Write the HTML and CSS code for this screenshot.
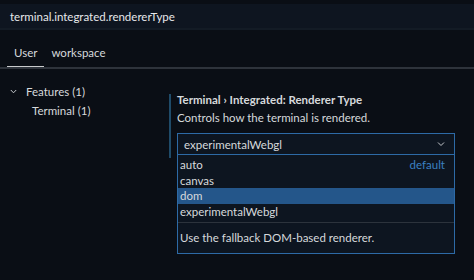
FILE: index.html
```html
<!DOCTYPE html>
<html>
<head>
<meta charset="utf-8">
<link rel="stylesheet" href="styles.css">
</head>
<body>
<div class="search">terminal.integrated.rendererType</div>
<div class="tabs">
  <div class="tab active">User</div>
  <div class="tab">workspace</div>
</div>
<div class="main">
  <div class="toc">
    <div class="toc-row"><svg class="chev" width="7" height="5" viewBox="0 0 7 5"><path d="M0.8 1 L3.5 3.8 L6.2 1" fill="none" stroke="#c5c8cc" stroke-width="1"/></svg>Features (1)</div>
    <div class="toc-row sub">Terminal (1)</div>
  </div>
  <div class="setting">
    <div class="head">
      <div class="title">Terminal › Integrated: Renderer Type</div>
      <div class="desc">Controls how the terminal is rendered.</div>
      <div class="select">
        <span>experimentalWebgl</span>
        <svg width="8" height="6" viewBox="0 0 8 6"><path d="M1 1.5 L4 4.5 L7 1.5" fill="none" stroke="#c5c8cc" stroke-width="1"/></svg>
      </div>
    </div>
    <div class="list">
      <div class="opt"><span>auto</span><span class="def">default</span></div>
      <div class="opt">canvas</div>
      <div class="opt sel">dom</div>
      <div class="opt">experimentalWebgl</div>
      <div class="optdesc">Use the fallback DOM-based renderer.</div>
    </div>
  </div>
</div>
</body>
</html>
```
FILE: styles.css
```css
html, body {
  margin: 0;
  background: #0a0e15;
  color: #d6d9dc;
  font-family: Lato, "Noto Sans", sans-serif;
  font-size: 11.5px;
}
.search {
  margin-top: 4px;
  height: 24px;
  line-height: 25px;
  padding-left: 10px;
  background: #0e1520;
  border-bottom: 2px solid #131b25;
  color: #e6e8ea;
  font-size: 11.5px;
}
.tabs {
  display: flex;
  height: 37px;
  align-items: flex-end;
  border-bottom: 2px solid #2e333b;
  padding-left: 7px;
}
.tab {
  padding: 0 7px;
  height: 24px;
  line-height: 20px;
}
.tab.active {
  border-bottom: 1px solid #c8cacc;
  height: 23px;
}
.main {
  display: flex;
  padding-top: 13px;
}
.toc {
  width: 169px;
}
.toc-row {
  height: 19px;
  line-height: 19px;
  display: flex;
  align-items: center;
  padding-left: 26px;
  position: relative;
}
.chev {
  position: absolute;
  left: 10px;
  top: 7px;
}
.toc-row.sub {
  padding-left: 32px;
}
.setting {
  margin-top: 12px;
  width: 286px;
}
.head {
  border-left: 2px solid #1f4b69;
  padding-left: 6px;
  padding-bottom: 3px;
}
.title {
  font-weight: bold;
  line-height: 12px;
  height: 12px;
}
.desc {
  margin-top: 3px;
  line-height: 17px;
}
.select {
  margin-top: 7px;
  height: 20px;
  border: 1px solid #2d6aa6;
  background: #0d1520;
  display: flex;
  align-items: center;
  justify-content: space-between;
  padding: 0 9px 0 6px;
}
.list {
  margin: -3px 0 0 8px;
  border: 1px solid #2d6aa6;
  border-top: none;
  background: #0d1520;
  padding-top: 2px;
}
.opt {
  height: 15.7px;
  line-height: 16px;
  padding: 0 9px 0 2px;
  display: flex;
  justify-content: space-between;
}
.opt.sel {
  background: #24568a;
}
.def {
  color: #3b80c2;
}
.optdesc {
  border-top: 1px solid #2c333c;
  margin-top: 2px;
  padding: 7px 2px 7px;
  line-height: 16px;
}
```
